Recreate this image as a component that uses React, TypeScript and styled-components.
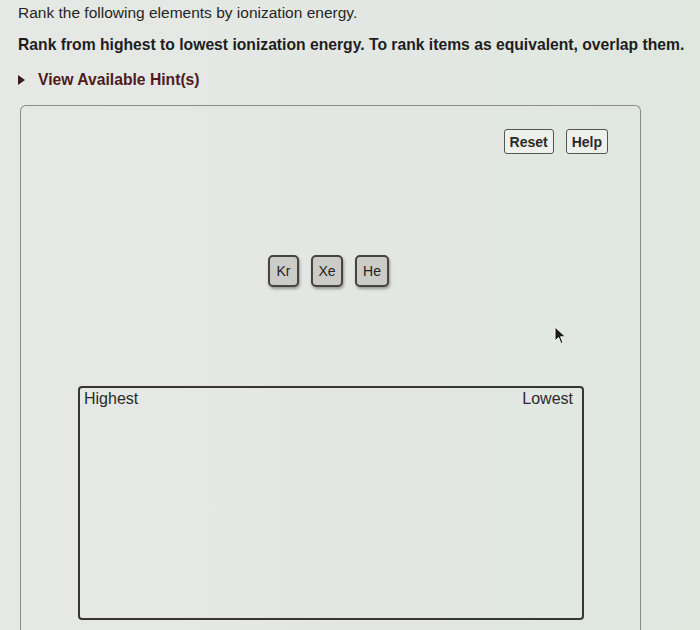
import React from "react";
import styled, { createGlobalStyle } from "styled-components";

const GlobalStyle = createGlobalStyle`
  html, body {
    margin: 0;
    padding: 0;
    background: #e3e7e3;
    font-family: "Liberation Sans", Arial, sans-serif;
    color: #1c1c1c;
  }
`;

const Page = styled.div`
  position: relative;
  width: 700px;
  height: 630px;
  overflow: hidden;
  background: linear-gradient(90deg, #e6e8e5 0%, #e3e7e4 50%, #dfe7df 100%);
`;

const Prompt = styled.div`
  padding: 3px 0 0 18px;
`;

const Question = styled.p`
  margin: 0;
  font-size: 15.5px;
  line-height: 20px;
  color: #262626;
`;

const Instruction = styled.p`
  margin: 12px 0 0;
  font-size: 15.7px;
  line-height: 20px;
  font-weight: bold;
  color: #1e1e1e;
  white-space: nowrap;
`;

const HintToggle = styled.div`
  display: flex;
  align-items: center;
  gap: 13px;
  margin-top: 16px;
  font-size: 15.7px;
  font-weight: bold;
  color: #4e1c1c;
`;

const Caret = styled.span`
  width: 0;
  height: 0;
  border-top: 5px solid transparent;
  border-bottom: 5px solid transparent;
  border-left: 7px solid #3c1c1c;
`;

const Panel = styled.div`
  margin: 16px 0 0 20px;
  width: 619px;
  height: 560px;
  border: 1px solid #8a8c8a;
  border-bottom: none;
  border-radius: 6px 6px 0 0;
  display: flex;
  flex-direction: column;
`;

const Toolbar = styled.div`
  display: flex;
  justify-content: flex-end;
  gap: 12px;
  padding: 23px 32px 0 0;
`;

const ToolButton = styled.button`
  height: 25px;
  padding: 0 5px;
  border: 1.5px solid #555;
  border-radius: 3px;
  background: #eef0ed;
  font-family: "Liberation Sans", Arial, sans-serif;
  font-size: 14px;
  font-weight: bold;
  color: #2a2a2a;
`;

const Tiles = styled.div`
  display: flex;
  justify-content: center;
  gap: 12px;
  margin: 101px 4px 0 0;
`;

const Tile = styled.div<{ $w: number }>`
  width: ${(p) => p.$w}px;
  height: 32px;
  box-sizing: border-box;
  border: 2.5px solid #4a4240;
  border-radius: 5px;
  background: #cbcbc7;
  box-shadow: 1px 2px 3px rgba(0, 0, 0, 0.35);
  display: flex;
  align-items: center;
  justify-content: center;
  font-size: 14px;
  color: #222;
`;

const RankBox = styled.div`
  margin: 99px 0 0 57px;
  width: 506px;
  height: 234px;
  box-sizing: border-box;
  border: 2px solid #3a3436;
  border-radius: 4px;
  display: flex;
  justify-content: space-between;
  align-items: flex-start;
  padding: 2px 9px 0 4px;
  font-size: 16px;
  color: #2a2a2a;
`;

const Cursor = styled.svg`
  position: absolute;
  left: 554px;
  top: 326px;
`;

export default function App() {
  return (
    <Page>
      <GlobalStyle />
      <Prompt>
        <Question>Rank the following elements by ionization energy.</Question>
        <Instruction>
          Rank from highest to lowest ionization energy. To rank items as equivalent, overlap them.
        </Instruction>
        <HintToggle>
          <Caret />
          View Available Hint(s)
        </HintToggle>
      </Prompt>
      <Panel>
        <Toolbar>
          <ToolButton>Reset</ToolButton>
          <ToolButton>Help</ToolButton>
        </Toolbar>
        <Tiles>
          <Tile $w={31}>Kr</Tile>
          <Tile $w={32}>Xe</Tile>
          <Tile $w={34}>He</Tile>
        </Tiles>
        <RankBox>
          <span>Highest</span>
          <span>Lowest</span>
        </RankBox>
      </Panel>
      <Cursor width="14" height="20" viewBox="0 0 14 20">
        <path d="M1 1 L1 15 L4.5 11.5 L7 17.5 L9 16.6 L6.6 10.8 L11.5 10.8 Z" fill="#1a1a1a" stroke="#f4f4f4" strokeWidth="1" />
      </Cursor>
    </Page>
  );
}
